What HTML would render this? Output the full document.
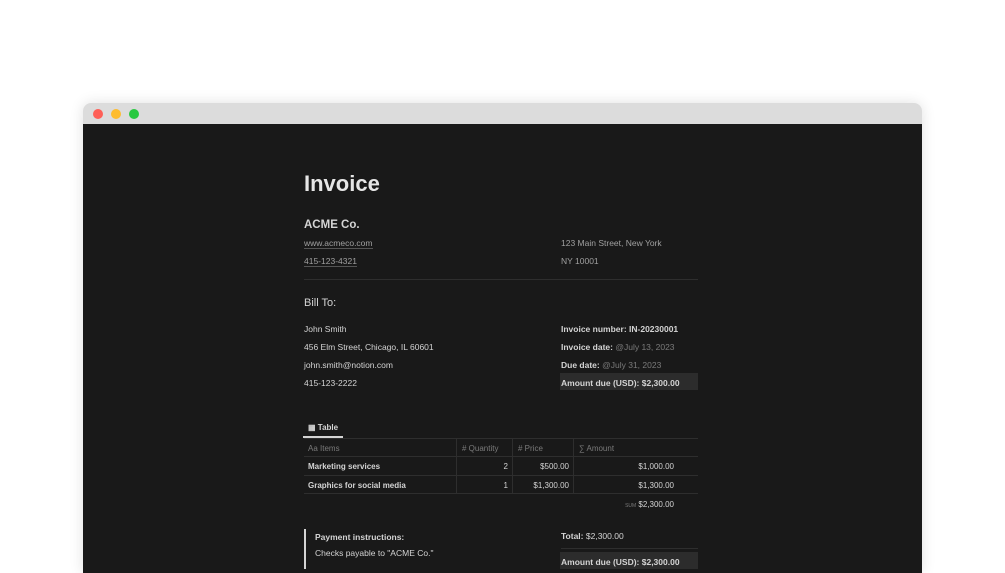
<!DOCTYPE html>
<html><head><style>
body{margin:0;width:1005px;height:565px;background:#fff;overflow:hidden;position:relative;font-family:"Liberation Sans",sans-serif}
.win{position:absolute;left:83px;top:103px;width:839px;height:470px;border-radius:8px 8px 0 0;box-shadow:0 0 14px rgba(0,0,0,.12);overflow:hidden}
.bar{height:21px;background:#dcdcdc}
.d{position:absolute;top:6px;width:10px;height:10px;border-radius:50%}
.body{position:absolute;top:21px;left:0;right:0;bottom:0;background:#191919}
.t{position:absolute;color:#d4d4d4;font-size:8.5px;white-space:nowrap;margin-top:1px}
.b{font-weight:bold}
.g{color:#7a7a7a}
.u{border-bottom:1px solid #555}
.hl{position:absolute;height:1px;background:#2e2e2e}
.vl{position:absolute;width:1px;background:#2e2e2e}
</style></head><body>
<div class="win"><div class="bar"></div>
<div class="d" style="left:10px;background:#fe5f57"></div>
<div class="d" style="left:28px;background:#febc2e"></div>
<div class="d" style="left:46px;background:#28c840"></div>
<div class="body"></div></div>

<div class="t b" style="left:304px;top:170px;font-size:22px;color:#e6e6e6">Invoice</div>
<div class="t b" style="left:304px;top:218px;font-size:11.5px">ACME Co.</div>
<div class="t u g" style="left:304px;top:237px;color:#a0a0a0">www.acmeco.com</div>
<div class="t u" style="left:304px;top:255px;color:#a0a0a0">415-123-4321</div>
<div class="t" style="left:561px;top:237px;color:#a0a0a0">123 Main Street, New York</div>
<div class="t" style="left:561px;top:255px;color:#a0a0a0">NY 10001</div>
<div class="hl" style="left:304px;width:394px;top:279px"></div>
<div class="t" style="left:304px;top:296px;font-size:11px">Bill To:</div>
<div class="t" style="left:304px;top:323px">John Smith</div>
<div class="t" style="left:304px;top:341px">456 Elm Street, Chicago, IL 60601</div>
<div class="t" style="left:304px;top:359px">john.smith@notion.com</div>
<div class="t" style="left:304px;top:377px">415-123-2222</div>
<div class="t b" style="left:561px;top:323px">Invoice number: IN-20230001</div>
<div class="t" style="left:561px;top:341px"><b>Invoice date:</b> <span class="g">@July 13, 2023</span></div>
<div class="t" style="left:561px;top:359px"><b>Due date:</b> <span class="g">@July 31, 2023</span></div>
<div style="position:absolute;left:560px;top:373px;width:138px;height:17px;background:#2c2c2c"></div>
<div class="t b" style="left:561px;top:377px">Amount due (USD): $2,300.00</div>

<div class="t b" style="left:308px;top:422px;font-size:8px">▦ Table</div>
<div style="position:absolute;left:303px;top:436px;width:40px;height:2px;background:#d4d4d4"></div>
<div class="hl" style="left:304px;width:394px;top:438px"></div>
<div class="hl" style="left:304px;width:394px;top:456px"></div>
<div class="hl" style="left:304px;width:394px;top:475px"></div>
<div class="hl" style="left:304px;width:394px;top:493px"></div>
<div class="vl" style="left:456px;top:438px;height:55px"></div>
<div class="vl" style="left:512px;top:438px;height:55px"></div>
<div class="vl" style="left:573px;top:438px;height:55px"></div>
<div class="t g" style="left:308px;top:443px;font-size:8px">Aa Items</div>
<div class="t g" style="left:462px;top:443px;font-size:8px"># Quantity</div>
<div class="t g" style="left:518px;top:443px;font-size:8px"># Price</div>
<div class="t g" style="left:579px;top:443px;font-size:8px">∑ Amount</div>
<div class="t b" style="left:308px;top:461px;font-size:8px">Marketing services</div>
<div class="t b" style="left:308px;top:480px;font-size:8px">Graphics for social media</div>
<div class="t" style="right:497px;top:461px;font-size:8px">2</div>
<div class="t" style="right:497px;top:480px;font-size:8px">1</div>
<div class="t" style="right:436px;top:461px;font-size:8px">$500.00</div>
<div class="t" style="right:436px;top:480px;font-size:8px">$1,300.00</div>
<div class="t" style="right:331px;top:461px;font-size:8px">$1,000.00</div>
<div class="t" style="right:331px;top:480px;font-size:8px">$1,300.00</div>
<div class="t" style="right:331px;top:499px;font-size:8px"><span class="g" style="font-size:5px">SUM</span> $2,300.00</div>

<div style="position:absolute;left:304px;top:529px;width:2px;height:40px;background:#d4d4d4"></div>
<div class="t b" style="left:315px;top:531px">Payment instructions:</div>
<div class="t" style="left:315px;top:547px">Checks payable to "ACME Co."</div>
<div class="t" style="left:561px;top:530px"><b>Total:</b> $2,300.00</div>
<div class="hl" style="left:561px;width:137px;top:548px"></div>
<div style="position:absolute;left:560px;top:552px;width:138px;height:17px;background:#2c2c2c"></div>
<div class="t b" style="left:561px;top:556px">Amount due (USD): $2,300.00</div>
</body></html>
